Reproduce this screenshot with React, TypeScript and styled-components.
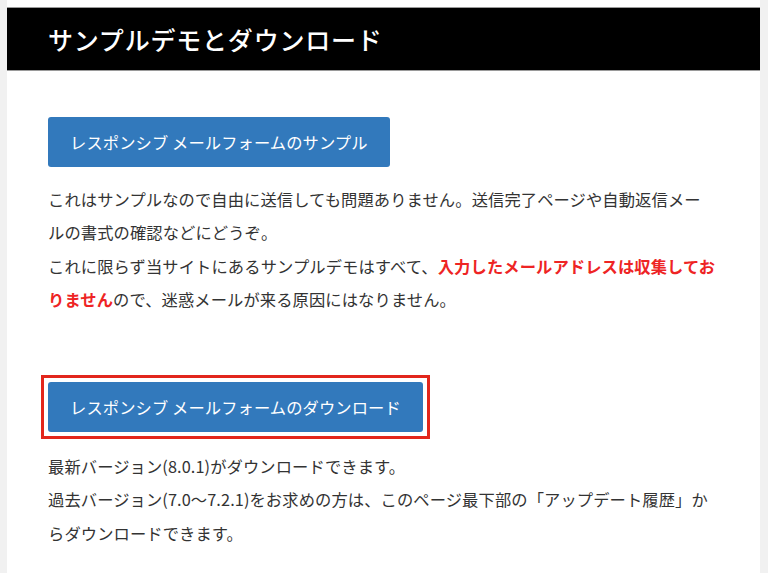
import React from "react";
import styled, { createGlobalStyle } from "styled-components";

const GlobalStyle = createGlobalStyle`
  html, body {
    margin: 0;
    padding: 0;
    background: #f1f1f1;
  }
  body {
    font-family: "Noto Sans CJK JP", "Noto Sans", sans-serif;
    color: #333;
  }
`;

const App = () => {
  return (
    <>
      <GlobalStyle />
      <Page>
        <Panel>
          <Header>
            <Title>サンプルデモとダウンロード</Title>
          </Header>
          <Body>
            <Section>
              <Button href="#">レスポンシブ メールフォームのサンプル</Button>
              <Text>
                これはサンプルなので自由に送信しても問題ありません。送信完了ページや自動返信メー
                <br />
                ルの書式の確認などにどうぞ。
                <br />
                これに限らず当サイトにあるサンプルデモはすべて、
                <Alert>入力したメールアドレスは収集してお</Alert>
                <br />
                <Alert>りません</Alert>ので、迷惑メールが来る原因にはなりません。
              </Text>
            </Section>
            <Section $gap={66}>
              <Marker>
                <Button href="#">レスポンシブ メールフォームのダウンロード</Button>
              </Marker>
              <Text $top={18}>
                最新バージョン(8.0.1)がダウンロードできます。
                <br />
                過去バージョン(7.0〜7.2.1)をお求めの方は、このページ最下部の「アップデート履歴」か
                <br />
                らダウンロードできます。
              </Text>
            </Section>
          </Body>
        </Panel>
      </Page>
    </>
  );
};

export default App;

const Page = styled.div`
  width: 768px;
  min-height: 573px;
  box-sizing: border-box;
  padding: 0 8px 0 7px;
  display: flex;
`;

const Panel = styled.div`
  flex: 1;
  background: #fff;
  padding-top: 7px;
  min-height: 573px;
  box-sizing: border-box;
`;

const Header = styled.div`
  height: 64px;
  box-sizing: border-box;
  background: #000;
  border-top: 1px solid #9a9a9a;
  border-bottom: 1px solid #9a9a9a;
  display: flex;
  align-items: center;
  padding-left: 41px;
`;

const Title = styled.h2`
  margin: 0;
  color: #fff;
  font-size: 25px;
  font-weight: 500;
  letter-spacing: 0.8px;
`;

const Body = styled.div`
  padding: 46px 0 0 41px;
`;

const Section = styled.div<{ $gap?: number }>`
  margin-top: ${(p) => p.$gap ?? 0}px;
`;

// square red highlight drawn around the download button
const Marker = styled.div`
  display: inline-block;
  vertical-align: top;
  outline: 3px solid #e2261c;
  outline-offset: 4px;
`;

const Button = styled.a`
  display: inline-block;
  vertical-align: top;
  height: 50px;
  line-height: 50px;
  padding: 0 22px;
  background: #3279bc;
  color: #fff;
  font-size: 16.3px;
  letter-spacing: 0.1px;
  text-decoration: none;
  border-radius: 3px;
`;

const Text = styled.p<{ $top?: number }>`
  margin: ${(p) => p.$top ?? 16}px 0 0;
  font-size: 16.3px;
  line-height: 33.3px;
  letter-spacing: 0.1px;
  white-space: nowrap;
`;

const Alert = styled.strong`
  color: #ee2424;
  font-weight: 700;
`;
